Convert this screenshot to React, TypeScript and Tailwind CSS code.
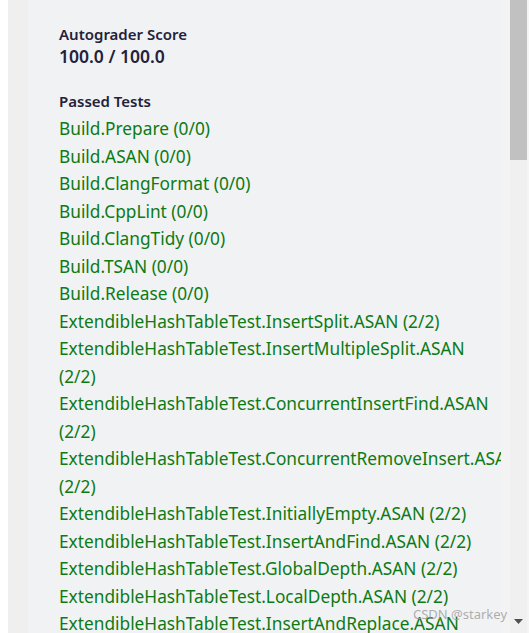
const tests = [
  'Build.Prepare (0/0)',
  'Build.ASAN (0/0)',
  'Build.ClangFormat (0/0)',
  'Build.CppLint (0/0)',
  'Build.ClangTidy (0/0)',
  'Build.TSAN (0/0)',
  'Build.Release (0/0)',
  'ExtendibleHashTableTest.InsertSplit.ASAN (2/2)',
  'ExtendibleHashTableTest.InsertMultipleSplit.ASAN (2/2)',
  'ExtendibleHashTableTest.ConcurrentInsertFind.ASAN (2/2)',
  'ExtendibleHashTableTest.ConcurrentRemoveInsert.ASAN (2/2)',
  'ExtendibleHashTableTest.InitiallyEmpty.ASAN (2/2)',
  'ExtendibleHashTableTest.InsertAndFind.ASAN (2/2)',
  'ExtendibleHashTableTest.GlobalDepth.ASAN (2/2)',
  'ExtendibleHashTableTest.LocalDepth.ASAN (2/2)',
  'ExtendibleHashTableTest.InsertAndReplace.ASAN (2/2)',
  'ExtendibleHashTableTest.RemoveAndFind.ASAN (2/2)',
];

export default function App() {
  return (
    <div
      className="relative flex h-[633px] w-[529px] overflow-hidden bg-white"
      style={{ fontFamily: '"Noto Sans", "Open Sans", sans-serif' }}
    >
      <div className="w-2 shrink-0 bg-white" />
      <div className="w-5 shrink-0 bg-[#efefef]" />

      {/* results panel */}
      <div className="w-[473px] shrink-0 overflow-hidden bg-[#f1f2f4] pl-[31px] pt-[24px]">
        <div className="w-[440px]">
          <h3 className="text-[15px] font-semibold leading-5 text-[#22223a]">Autograder Score</h3>
          <div className="text-[17.5px] font-semibold leading-6 text-[#22223a]">100.0 / 100.0</div>

          <h3 className="mt-[23px] text-[15px] font-semibold leading-5 text-[#22223a]">Passed Tests</h3>
          <ul className="mt-[4px]">
            {tests.map(t => (
              <li key={t} className="text-[17.3px] leading-[27.5px] text-[#0d7a14]">
                {t}
              </li>
            ))}
          </ul>
        </div>
      </div>

      <div className="w-[9px] shrink-0 bg-[#f3f3f3]" />

      {/* scrollbar */}
      <div className="flex w-[17px] shrink-0 flex-col bg-[#f0f0f0]">
        <div className="h-[160px] bg-[#c1c1c1]" />
        <div className="flex-1" />
        <div className="flex h-[17px] items-start justify-center pt-[3px]">
          <svg width="9" height="5" viewBox="0 0 9 5">
            <path d="M0 0 L9 0 L4.5 5 Z" fill="#505050" />
          </svg>
        </div>
      </div>
      <div className="w-[2px] shrink-0 bg-[#f5f5f5]" />

      {/* watermark */}
      <div className="absolute left-[413px] top-[606px] text-[13px] leading-4 text-[#9a9a9a]/80">
        CSDN @starkey
      </div>
    </div>
  );
}
